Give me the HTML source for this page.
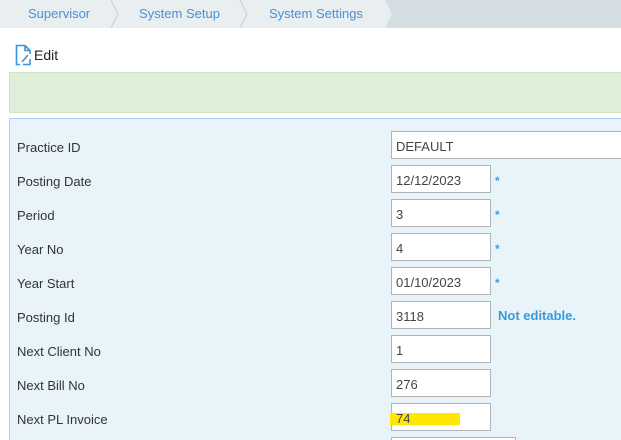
<!DOCTYPE html>
<html style="width:621px;height:440px;overflow:hidden"><head><style>
*{margin:0;padding:0;box-sizing:border-box}
body{width:621px;height:440px;overflow:hidden;background:#fff;font-family:"Liberation Sans",sans-serif;position:relative;font-size:13px;color:#333}
.bc{position:absolute;left:0;top:0;width:621px;height:28px;background:#e9eef0}
.bc .last{position:absolute;left:385px;top:0;width:236px;height:28px;background:#d5dee3;clip-path:polygon(0 0,100% 0,100% 100%,0 100%,7px 50%)}
.bc span{position:absolute;top:6px;color:#4a90d6;font-size:13px}
.sep{position:absolute;top:0}
.edit{position:absolute;left:34px;top:47px;font-size:14px;color:#222}
.green{position:absolute;left:9px;top:72px;width:620px;height:41px;background:#dfeed9;border:1px solid #cfe3c5}
.panel{position:absolute;left:9px;top:118px;width:620px;height:330px;background:#e8f3fa;border:1px solid #a9d3ee}
.lbl{position:absolute;left:17px;font-size:13px;color:#333}
.inp{position:absolute;left:391px;width:100px;height:28px;background:#fff;border:1px solid #b3b3b3;padding:7px 0 0 4px;font-size:13px;color:#444;overflow:hidden}
.ast{position:absolute;left:495px;color:#4a9ad9;font-size:12px;font-weight:bold}
.ne{position:absolute;left:498px;top:308px;color:#3a9ad9;font-weight:bold;font-size:13px}
.hl{position:absolute;left:390px;top:413px;width:70px;height:12px;background:#ffe800}
</style></head><body>
<div class="bc">
<div class="last"></div>
<span style="left:28px">Supervisor</span>
<span style="left:139px">System Setup</span>
<span style="left:269px">System Settings</span>
<svg class="sep" width="621" height="28"><polyline points="111,0 118,14 111,28" fill="none" stroke="#c9d1d5"/><polyline points="240,0 247,14 240,28" fill="none" stroke="#c9d1d5"/></svg>
</div>
<svg style="position:absolute;left:14px;top:44px" width="20" height="22" viewBox="0 0 20 22"><path d="M6 20.5H2.5V1.5H11L16 6.5V10M11 1.5V6.5H16M9 20.5H16V15" fill="none" stroke="#3a95dd" stroke-width="1.6"/><path d="M8 18L14 11" stroke="#3a95dd" stroke-width="1.6"/></svg>
<div class="edit">Edit</div>
<div class="green"></div>
<div class="panel"></div>
<div class="lbl" style="top:140px">Practice ID</div>
<div class="lbl" style="top:174px">Posting Date</div>
<div class="lbl" style="top:208px">Period</div>
<div class="lbl" style="top:242px">Year No</div>
<div class="lbl" style="top:276px">Year Start</div>
<div class="lbl" style="top:310px">Posting Id</div>
<div class="lbl" style="top:344px">Next Client No</div>
<div class="lbl" style="top:378px">Next Bill No</div>
<div class="lbl" style="top:412px">Next PL Invoice</div>
<div class="inp" style="top:131px;width:240px">DEFAULT</div>
<div class="inp" style="top:165px">12/12/2023</div>
<div class="inp" style="top:199px">3</div>
<div class="inp" style="top:233px">4</div>
<div class="inp" style="top:267px">01/10/2023</div>
<div class="inp" style="top:301px">3118</div>
<div class="inp" style="top:335px">1</div>
<div class="inp" style="top:369px">276</div>
<div class="inp" style="top:403px"></div>
<div class="hl"></div>
<div class="inp" style="top:403px;background:transparent;border-color:transparent">74</div>
<div class="inp" style="top:437px;width:125px;height:3px"></div>
<div class="ast" style="top:174px">*</div>
<div class="ast" style="top:208px">*</div>
<div class="ast" style="top:242px">*</div>
<div class="ast" style="top:276px">*</div>
<div class="ne">Not editable.</div>
</body></html>
